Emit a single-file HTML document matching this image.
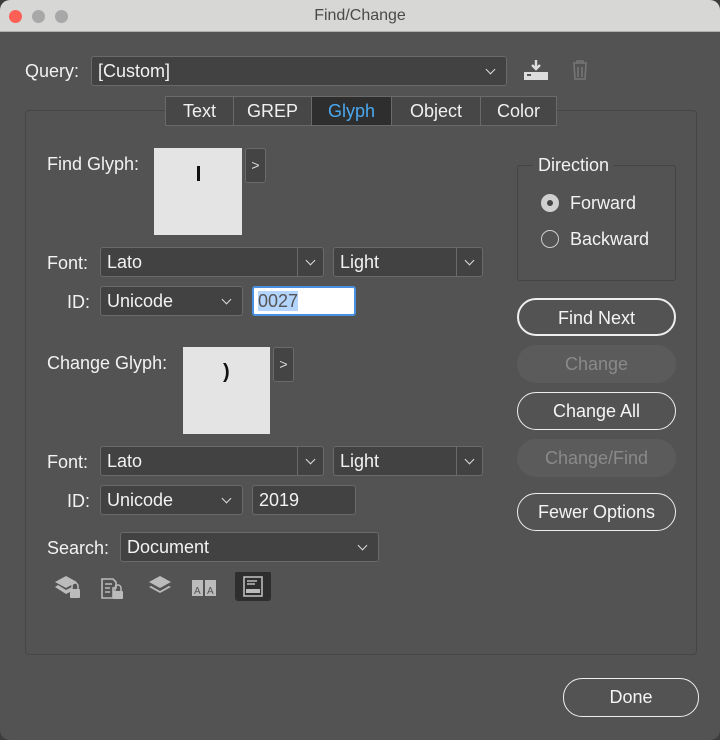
<!DOCTYPE html>
<html><head><style>
*{box-sizing:border-box;margin:0;padding:0}
body{width:720px;height:740px;background:#3c3c3c;font-family:"Liberation Sans",sans-serif;color:#f0f0f0;position:relative;overflow:hidden}
.win{position:absolute;left:0;top:0;width:720px;height:740px;background:#535353;border-radius:10px;overflow:hidden}
.tb{position:absolute;left:0;top:0;width:720px;height:32px;background:#d7d7d5;border-bottom:1px solid #b0b0b0;text-align:center;color:#4a4a4a;font-size:16px;line-height:32px}
.dot{position:absolute;top:10px;width:13px;height:13px;border-radius:50%;background:#a8a8a8}
.a{position:absolute}
.lbl{position:absolute;font-size:18px;color:#f2f2f2;line-height:20px}
.sel{position:absolute;background:#424242;border:1px solid #6a6a6a;border-radius:3px;font-size:18px;line-height:28px;padding-left:6px;color:#f2f2f2}
.chev{position:absolute;top:0;width:26px;height:100%;}
.chev:after{content:"";position:absolute;left:9px;top:9px;width:6px;height:6px;border-right:1.6px solid #ddd;border-bottom:1.6px solid #ddd;transform:rotate(45deg)}
.div{border-left:1px solid #6a6a6a}
.btn{position:absolute;left:517px;width:159px;height:38px;border-radius:19px;font-size:18px;text-align:center;line-height:36px;border:2px solid #eee;color:#f4f4f4}
.dis{border:none;background:#5b5b5b;color:#8a8a8a;line-height:38px}
.gbox{position:absolute;background:#e4e4e4;color:#111;text-align:center;font-size:24px}
.arr{position:absolute;width:21px;height:35px;background:#444;border:1px solid #6a6a6a;border-radius:3px;color:#ddd;font-size:14px;text-align:center;line-height:33px}
.tab{position:absolute;top:96px;height:30px;background:#474747;border:1px solid #6a6a6a;font-size:18px;text-align:center;line-height:28px;color:#f0f0f0}
</style></head><body>
<div class="win">
<div class="tb">Find/Change
<div class="dot" style="left:9px;background:#fe5f57"></div><div class="dot" style="left:32px"></div><div class="dot" style="left:55px"></div></div>

<div class="lbl" style="left:25px;top:61px">Query:</div>
<div class="sel" style="left:91px;top:56px;width:416px;height:30px">[Custom]<div class="chev" style="right:2px"></div></div>
<svg class="a" style="left:523px;top:58px" width="26" height="24" viewBox="0 0 26 24"><path d="M13 2v9M9 7l4 4 4-4" stroke="#ddd" stroke-width="2.4" fill="none"/><rect x="1" y="14" width="24" height="8" fill="#ddd"/><rect x="4" y="16" width="4" height="2" fill="#535353"/></svg>
<svg class="a" style="left:571px;top:59px" width="18" height="22" viewBox="0 0 18 22"><g stroke="#777" stroke-width="1.5" fill="none"><path d="M2 4h14M6 4V2h6v2M3 5l1 15h10l1-15M7 8v10M11 8v10"/></g></svg>

<div class="a" style="left:25px;top:110px;width:672px;height:545px;border:1px solid #454545;border-radius:4px"></div>
<div class="tab" style="left:165px;width:69px">Text</div>
<div class="tab" style="left:233px;width:79px">GREP</div>
<div class="tab" style="left:311px;width:81px;background:#2e2e2e;color:#4aa8f0">Glyph</div>
<div class="tab" style="left:391px;width:90px">Object</div>
<div class="tab" style="left:480px;width:77px">Color</div>

<div class="lbl" style="left:47px;top:154px">Find Glyph:</div>
<div class="gbox" style="left:154px;top:148px;width:88px;height:87px"><div class="a" style="left:43px;top:18px;width:3px;height:15px;background:#111"></div></div>
<div class="arr" style="left:245px;top:148px">&gt;</div>

<div class="lbl" style="left:47px;top:253px">Font:</div>
<div class="sel" style="left:100px;top:247px;width:224px;height:30px">Lato<div class="chev div" style="right:0"></div></div>
<div class="sel" style="left:333px;top:247px;width:150px;height:30px">Light<div class="chev div" style="right:0"></div></div>
<div class="lbl" style="left:67px;top:292px">ID:</div>
<div class="sel" style="left:100px;top:286px;width:143px;height:30px">Unicode<div class="chev" style="right:2px"></div></div>
<div class="a" style="left:252px;top:286px;width:104px;height:30px;background:#fff;border:2px solid #4a90e2;border-radius:3px;padding:3px 4px"><span style="background:#b3d4fc;color:#555;font-size:18px;line-height:20px">0027</span></div>

<div class="lbl" style="left:47px;top:353px">Change Glyph:</div>
<div class="gbox" style="left:183px;top:347px;width:87px;height:87px"><div class="a" style="left:40px;top:14px;font-size:20px;font-weight:bold">)</div></div>
<div class="arr" style="left:273px;top:347px">&gt;</div>

<div class="lbl" style="left:47px;top:452px">Font:</div>
<div class="sel" style="left:100px;top:446px;width:224px;height:30px">Lato<div class="chev div" style="right:0"></div></div>
<div class="sel" style="left:333px;top:446px;width:150px;height:30px">Light<div class="chev div" style="right:0"></div></div>
<div class="lbl" style="left:67px;top:491px">ID:</div>
<div class="sel" style="left:100px;top:485px;width:143px;height:30px">Unicode<div class="chev" style="right:2px"></div></div>
<div class="sel" style="left:252px;top:485px;width:104px;height:30px">2019</div>

<div class="lbl" style="left:47px;top:538px">Search:</div>
<div class="sel" style="left:120px;top:532px;width:259px;height:30px">Document<div class="chev" style="right:2px"></div></div>

<svg class="a" style="left:52px;top:572px" width="230" height="30" viewBox="0 0 230 30">
<g fill="#bbb">
<path d="M3 10l11-6 11 6-11 6z"/><path d="M3 15l3-2 8 5 6-3v4l-6 3z"/><rect x="18" y="17" width="10" height="9" rx="1"/>
<path d="M20 17v-3a3 3 0 0 1 6 0v3" stroke="#bbb" stroke-width="1.5" fill="none"/>
<path d="M50 7h11l3 3v6h-3v10H50z" fill="none" stroke="#bbb" stroke-width="1.6"/><path d="M53 12h7M53 16h5M53 20h5" stroke="#bbb" stroke-width="1.5"/>
<rect x="61" y="19" width="10" height="8" rx="1"/><path d="M63 19v-3a3 3 0 0 1 6 0v3" stroke="#bbb" stroke-width="1.5" fill="none"/>
<path d="M97 10l11-6 11 6-11 6z"/><path d="M97 15l2-1 9 5 9-5 2 1-11 6z"/>
<rect x="140" y="8" width="11" height="16"/><rect x="153" y="8" width="11" height="16"/>
</g>
<text x="142" y="22" font-size="10" fill="#535353" font-family="Liberation Sans">A</text><text x="155" y="22" font-size="10" fill="#535353" font-family="Liberation Sans">A</text>
<rect x="183" y="-1" width="36" height="30" rx="3" fill="#2e2e2e"/>
<rect x="192" y="5" width="18" height="19" fill="none" stroke="#bbb" stroke-width="1.6"/><path d="M195 9h10M195 12h8" stroke="#bbb" stroke-width="1.5"/><rect x="194" y="17" width="14" height="4" fill="#bbb"/>
</svg>

<div class="a" style="left:517px;top:165px;width:159px;height:116px;border:1px solid #444;border-radius:3px"></div>
<div class="lbl" style="left:533px;top:155px;background:#535353;padding:0 5px">Direction</div>
<div class="a" style="left:541px;top:194px;width:18px;height:18px;border-radius:50%;background:#d0d0d0"><div class="a" style="left:6px;top:6px;width:6px;height:6px;border-radius:50%;background:#444"></div></div>
<div class="lbl" style="left:570px;top:193px">Forward</div>
<div class="a" style="left:541px;top:230px;width:18px;height:18px;border-radius:50%;border:1.5px solid #ccc"></div>
<div class="lbl" style="left:570px;top:229px">Backward</div>

<div class="btn" style="top:298px;border-width:2.5px">Find Next</div>
<div class="btn dis" style="top:345px">Change</div>
<div class="btn" style="top:392px;border-width:1.5px">Change All</div>
<div class="btn dis" style="top:439px">Change/Find</div>
<div class="btn" style="top:493px;border-width:1.5px">Fewer Options</div>
<div class="btn" style="top:678px;left:563px;width:136px;height:39px;border-width:1.5px">Done</div>
</div>
</body></html>
